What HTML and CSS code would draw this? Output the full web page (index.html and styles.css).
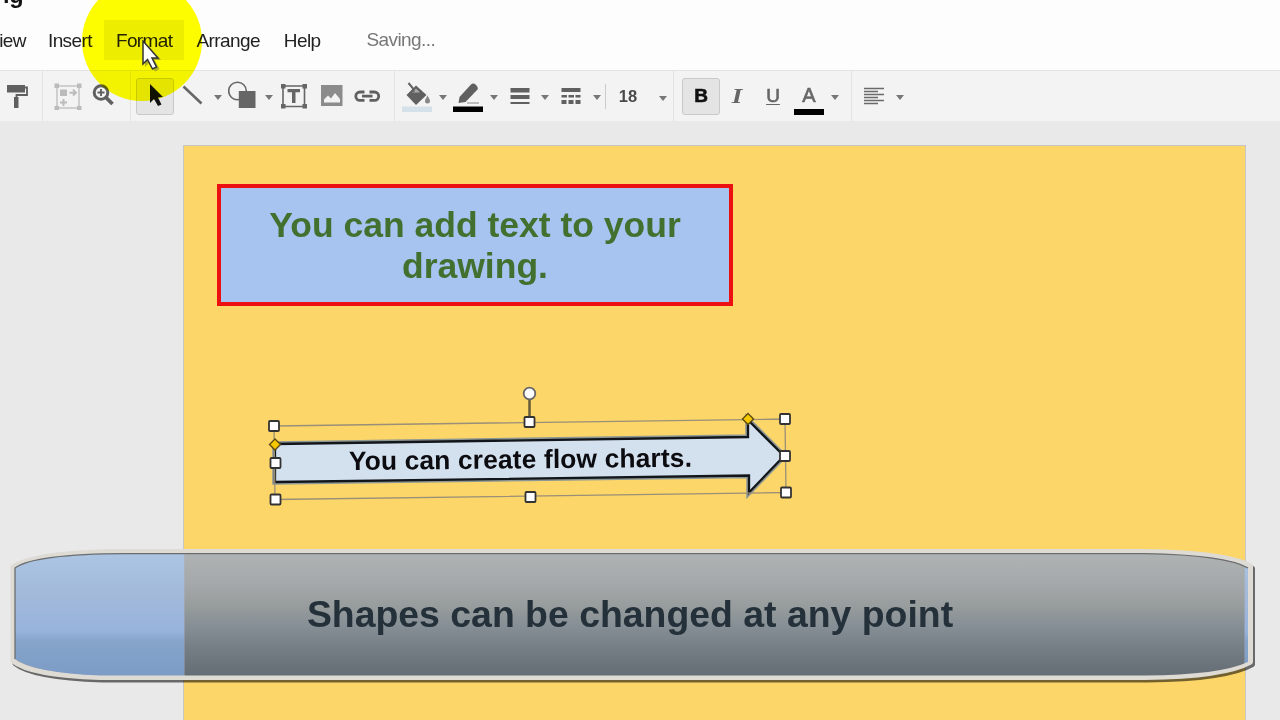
FILE: index.html
```html
<!DOCTYPE html>
<html lang="en">
<head>
    <meta charset="UTF-8">
    <meta name="viewport" content="width=device-width, initial-scale=1.0">
    <title>Drawing</title>
    <link rel="stylesheet" href="styles.css">
</head>
<body>

<header>
    <div class="doc-title">ng</div>
    <nav class="menu">
        <span class="menu-item view">View</span>
        <span class="menu-item">Insert</span>
        <span class="menu-item active">Format</span>
        <span class="menu-item">Arrange</span>
        <span class="menu-item">Help</span>
        <span class="status">Saving...</span>
    </nav>
</header>

<!-- Toolbar -->
<div class="toolbar">
    <div class="group paint">
        <svg class="icon" viewBox="0 0 30 38"><path d="M5 8h18v7.500H5z" fill="#606060"/><path d="M23 10.500h2v7.500H14.500v4" fill="none" stroke="#606060" stroke-width="1.800"/><path d="M12 20h4.500v11H12z" fill="#606060"/></svg>
    </div>
    <div class="group view-tools">
        <svg class="icon" viewBox="0 0 30 38"><path d="M4 9h22v22H4z" fill="none" stroke="#c4c4c4" stroke-width="1.500"/><g fill="#bbb"><path d="M1.500 6.500h4.500v4.500H1.500zM24 6.500h4.500v4.500H24zM1.500 29h4.500v4H1.500zM24 29h4.500v4H24zM7 12.500h7v6.500H7z"/></g><path d="M16.500 15.700h6M20 12.700l3 3-3 3M10.500 22v7M7 25.500h7" fill="none" stroke="#bbb" stroke-width="1.900"/></svg>
        <svg class="icon" viewBox="0 0 30 38"><circle cx="12" cy="15.500" r="6.800" fill="none" stroke="#606060" stroke-width="3"/><path d="M8.500 15.500h7M12 12v7" stroke="#606060" stroke-width="1.900"/><path d="M17 20.500l6.500 6.500" stroke="#606060" stroke-width="3.800"/></svg>
    </div>
    <div class="group shape-tools">
        <div class="pressed"><svg class="icon" viewBox="0 0 30 38"><path d="M10 7v19l4-4 4 7 3.500-1.500-3.500-7 5-.500z" fill="#111"/></svg></div>
        <svg class="icon line" viewBox="0 0 30 38"><path d="M6.500 9.500l18 17" stroke="#666" stroke-width="2.600"/></svg>
        <span class="caret"></span>
        <svg class="icon" viewBox="0 0 30 38"><circle cx="9.500" cy="14" r="8.800" fill="none" stroke="#666" stroke-width="1.600"/><path d="M10.800 14h16.700v17H10.800z" fill="#666"/></svg>
        <span class="caret"></span>
        <svg class="icon" viewBox="0 0 30 38"><path d="M4 9h21.500v20.500H4z" fill="none" stroke="#666" stroke-width="1.600"/><path d="M2 7h4.500v4.500H2zM23.500 7h4.500v4.500h-4.500zM2 27h4.500v4.500H2zM23.500 27h4.500v4.500h-4.500z" fill="#666"/><path d="M8.500 12h12.500v3.300h-4.500v10.700h-3.500V15.300H8.500z" fill="#666"/></svg>
        <svg class="icon image" viewBox="0 0 30 38"><path d="M4 8h21.500v21H4z" fill="#8b8b8b"/><path d="M7 25.500v-3l4-4 3 3 4-5.500 5 6v3.500z" fill="#f2f2f2"/></svg>
        <svg class="icon" viewBox="0 0 30 38"><path d="M12.500 15H8a4.200 4.200 0 0 0 0 8.400h4.500M17.500 15h5a4.200 4.200 0 0 1 0 8.400h-5M10 19.200h10.500" fill="none" stroke="#606060" stroke-width="2.800"/></svg>
    </div>
    <div class="group style-tools">
        <svg class="icon" viewBox="0 0 30 38"><path d="M14 8.500l10.500 9.500L14 28 4.500 18z" fill="#606060"/><path d="M10 15.500l4-4 4 4z" fill="#aaa"/><path d="M6.500 6l5 6v3" fill="none" stroke="#606060" stroke-width="2"/><path d="M25.500 18.500c-1.500 3-2.500 4-2.500 5.500a2.500 2.500 0 0 0 5 0c0-1.500-1-2.500-2.500-5.500z" fill="#888"/><path d="M0 29.500h30v5.500H0z" fill="#d5e1e8"/></svg>
        <span class="caret"></span>
        <svg class="icon" viewBox="0 0 30 38"><path d="M5.500 26l1-6L18 7.500q2.500-2 5 .500t1.500 4.500L12.500 25z" fill="#606060"/><path d="M14 26h12" stroke="#aaa" stroke-width="1.500"/><path d="M0 29.500h30v5.500H0z"/></svg>
        <span class="caret"></span>
        <svg class="icon" viewBox="0 0 30 38"><path d="M5.500 11h19v4.500h-19zM5.500 18h19v4h-19zM5.500 25h19v2h-19z" fill="#606060"/></svg>
        <span class="caret"></span>
        <svg class="icon" viewBox="0 0 30 38"><path d="M5.500 11h19v4h-19zM5.500 18h5.500v2.500H5.500zM12.500 18h5.500v2.500h-5.500zM19.500 18h5v2.500h-5zM5.500 23h5v4h-5zM12.500 23h5v4h-5zM19.500 23h5v4h-5z" fill="#606060"/></svg>
        <span class="caret"></span>
    </div>
    <div class="group size">
        <span class="font-size">18</span>
        <span class="caret"></span>
    </div>
    <div class="group text-tools">
        <div class="pressed letter bold">B</div>
        <span class="letter italic">I</span>
        <span class="letter underline">U</span>
        <span class="letter color">A</span>
        <span class="caret"></span>
    </div>
    <div class="group align">
        <svg class="icon" viewBox="0 0 30 38"><path d="M5 11.500h20M5 14.500h14M5 17.500h20M5 20.500h14M5 23.500h20M5 26.500h14" stroke="#6a6a6a" stroke-width="1.600"/></svg>
        <span class="caret"></span>
    </div>
</div>

<!-- Drawing area -->
<main class="workspace">
    <div class="page">
        <div class="text-box">You can add text to your<br>drawing.</div>
        <svg class="arrow" width="540" height="130" viewBox="260 380 540 130">
            <path d="M275 444L748 437V420L784 456L749 492.500V475.500L275 482z" fill="none" stroke="#8d9794" stroke-width="5.500"/>
            <path d="M275 444L748 437V420L784 456L749 492.500V475.500L275 482z" fill="#d3e1ef" stroke="#12161a" stroke-width="2.300"/>
            <path d="M274 426L785 419L786 492.500L275 499.500z" fill="none" stroke="#9a8f78" stroke-width="1.300"/>
            <path d="M529.500 398v20" stroke="#665a38" stroke-width="2.500"/>
            <text class="arrow-text" x="349" y="470" textLength="343" transform="rotate(-.55 349 470)">You can create flow charts.</text>
            <g fill="#fff" stroke="#333" stroke-width="1.800">
                <circle cx="529.500" cy="393.500" r="5.800" stroke="#666"/>
                <rect x="269" y="421" width="10" height="10" rx="1"/>
                <rect x="524.500" y="417" width="10" height="10" rx="1"/>
                <rect x="780" y="414" width="10" height="10" rx="1"/>
                <rect x="270.500" y="458" width="10" height="10" rx="1"/>
                <rect x="780" y="451" width="10" height="10" rx="1"/>
                <rect x="270.500" y="494.500" width="10" height="10" rx="1"/>
                <rect x="525.500" y="492" width="10" height="10" rx="1"/>
                <rect x="781" y="487.500" width="10" height="10" rx="1"/>
            </g>
            <path d="M275 439l5.500 5.500-5.500 5.500-5.500-5.500zM748 413.500l5.500 5.500-5.500 5.500-5.500-5.500z" fill="#f5c800" stroke="#5c4a10" stroke-width="1.400"/>
        </svg>
    </div>
</main>

<!-- Caption banner -->
<div class="caption">
    <svg class="caption-shape" width="1260" height="144" viewBox="0 545 1260 144">
        <defs>
            <linearGradient id="blue" x1="0" y1="0" x2="0" y2="1">
                <stop offset="0" stop-color="#abc5e3"/>
                <stop offset=".35" stop-color="#a2b9da"/>
                <stop offset=".64" stop-color="#96b3dc"/>
                <stop offset=".72" stop-color="#86a4ca"/>
                <stop offset="1" stop-color="#7c9cc6"/>
            </linearGradient>
            <linearGradient id="gray" x1="0" y1="0" x2="0" y2="1">
                <stop offset="0" stop-color="#afb3b3"/>
                <stop offset=".25" stop-color="#a5a8aa"/>
                <stop offset=".45" stop-color="#969b9b"/>
                <stop offset=".58" stop-color="#879096"/>
                <stop offset=".8" stop-color="#747c83"/>
                <stop offset="1" stop-color="#656d74"/>
            </linearGradient>
            <clipPath id="inner"><path d="M15 568Q35 554 125 553.500H1145Q1225 555 1248 568V662Q1220 675 1145 675.500H100Q35 673 15 659z"/></clipPath>
        </defs>
        <g stroke-linejoin="round">
            <path d="M13 567Q35 552 125 551.500H1145Q1228 553 1250.500 566V662Q1225 676.500 1145 677.500H100Q30 675 13 661z" fill="none" stroke="#000" stroke-opacity=".55" stroke-width="5" transform="translate(2 2.500)"/>
            <path d="M13 567Q35 552 125 551.500H1145Q1228 553 1250.500 566V662Q1225 676.500 1145 677.500H100Q30 675 13 661z" fill="#aaa" stroke="#dedbd5" stroke-width="5"/>
        </g>
        <g clip-path="url(#inner)">
            <path d="M15 553h169.500v123H15zM1244.500 553h4v123h-4z" fill="url(#blue)"/>
            <path d="M184.500 553h1060v123h-1060z" fill="url(#gray)"/>
        </g>
        <path d="M15 659V568Q35 554 125 553.700H1145Q1225 555 1248 568" fill="none" stroke="#6b6d6e" stroke-width="1.300"/>
    </svg>
    <div class="caption-text">Shapes can be changed at any point</div>
</div>

<!-- Click highlight and mouse pointer -->
<div class="highlight"></div>
<svg class="pointer" width="24" height="36" viewBox="0 0 24 36"><path d="M4 3v24l5-5 5 9.500 4.500-2.500-5-9h6.500z" fill="#555" opacity=".45"/><path d="M2 1v23l4.500-4.500 5 9.500 4-2-4.500-9h6z" fill="#fff" stroke="#333" stroke-width="1.500"/></svg>

</body>
</html>
```
FILE: styles.css
```css
/* General Styles */
body {
    font-family: "Liberation Sans", Arial, sans-serif;
    margin: 0;
    width: 1280px;
    height: 720px;
    overflow: hidden;
    position: relative;
    display: flex;
    flex-direction: column;
    background-color: #e9e9e9;
}
header {
    height: 70px;
    background-color: #fdfdfd;
    overflow: hidden;
    flex-shrink: 0;
}
.doc-title {
    height: 20px;
    margin: -17px 0 0 -5px;
    font-size: 23.5px;
    line-height: 25px;
    font-weight: bold;
    color: #111;
}
.menu {
    display: flex;
    height: 40px;
    margin-top: 17px;
    align-items: center;
    font-size: 19px;
    letter-spacing: -0.6px;
    color: #222;
}
.menu-item {
    padding: 0 12px;
    height: 40px;
    line-height: 42px;
}
.menu-item.view {
    margin-left: -24.5px;
    padding-right: 10px;
}
.menu-item.active {
    background-color: #ededed;
}
.status {
    margin-left: 34px;
    line-height: 42px;
    color: #777;
}

/* Toolbar */
.toolbar {
    display: flex;
    height: 50px;
    flex-shrink: 0;
    border-top: 1px solid #e3e3e3;
    background-color: #f3f3f3;
}
.group {
    display: flex;
    align-items: center;
    gap: 5.5px;
    box-sizing: border-box;
    border-left: 1px solid #e2e2e2;
}
.icon {
    width: 30px;
    height: 38px;
    flex-shrink: 0;
}
.caret {
    width: 0;
    height: 0;
    margin: 3px 1px 0;
    border: 4px solid transparent;
    border-top: 5px solid #777;
    border-bottom: 0;
}
.pressed {
    width: 38px;
    height: 37px;
    box-sizing: border-box;
    display: flex;
    justify-content: center;
    align-items: center;
    border: 1px solid #c9c9c9;
    border-radius: 3px;
    background-color: #e4e4e4;
}
.paint {
    width: 42px;
    padding-left: 2px;
    border-left: 0;
}
.view-tools {
    width: 88px;
    padding-left: 10px;
}
.shape-tools {
    width: 264px;
    padding-left: 5px;
}
.line {
    margin-left: -2.5px;
}
.image {
    margin-left: 2px;
}
.style-tools {
    width: 211px;
    padding-left: 7px;
    gap: 5.7px;
}
.size {
    width: 68px;
    height: 25px;
    margin-top: 13px;
    padding-left: 7px;
    gap: 15px;
    border-color: #ccc;
}
.font-size {
    width: 30px;
    text-align: center;
    font-size: 16.5px;
    font-weight: bold;
    color: #4a4a4a;
}
.text-tools {
    width: 178px;
    padding-left: 8px;
    gap: 6px;
}
.letter {
    width: 30px;
    text-align: center;
    font-size: 20px;
    font-weight: bold;
    color: #666;
}
.bold {
    width: 38px;
    font-size: 19px;
    color: #111;
    -webkit-text-stroke: 0.6px #111;
}
.italic {
    margin-left: -4px;
    font-family: "Liberation Serif", serif;
    font-style: italic;
    font-size: 21px;
    transform: scaleX(1.3);
}
.underline {
    font-size: 19px;
    font-weight: normal;
    text-decoration: underline;
    text-underline-offset: 2px;
    -webkit-text-stroke: 0.6px #666;
}
.color {
    height: 28px;
    line-height: 28px;
    margin-top: 3px;
    border-bottom: 6px solid #000;
    font-weight: normal;
    font-size: 20px;
    -webkit-text-stroke: 0.6px #666;
}
.align {
    padding-left: 7px;
}

/* Drawing area */
.workspace {
    flex: 1;
    padding: 24px 0 0 183px;
    background-color: #e9e9e9;
}
.page {
    position: relative;
    width: 1061px;
    height: 600px;
    border: 1px solid #c9c5c0;
    border-bottom: 0;
    background-color: #fcd668;
}
.text-box {
    position: absolute;
    left: 33px;
    top: 38px;
    width: 516px;
    height: 122px;
    box-sizing: border-box;
    padding-top: 17px;
    border: 4px solid #ec1010;
    background-color: #a7c3f0;
    color: #41702f;
    font-size: 35.5px;
    line-height: 41px;
    font-weight: bold;
    text-align: center;
}
.arrow {
    position: absolute;
    left: 76px;
    top: 234px;
}
.arrow-text {
    font-size: 26.4px;
    font-weight: bold;
    fill: #0c0c10;
}

/* Caption banner */
.caption {
    position: absolute;
    left: 0;
    top: 545px;
    width: 1260px;
    height: 144px;
    display: flex;
    justify-content: center;
    align-items: center;
}
.caption-shape {
    position: absolute;
    left: 0;
    top: 0;
}
.caption-text {
    position: relative;
    top: -3px;
    font-size: 37.4px;
    font-weight: bold;
    color: #24313a;
}

/* Mouse */
.highlight {
    position: absolute;
    left: 82px;
    top: -19px;
    width: 120px;
    height: 120px;
    border-radius: 50%;
    background-color: #ffff00;
    mix-blend-mode: multiply;
}
.pointer {
    position: absolute;
    left: 141px;
    top: 40px;
}
```
